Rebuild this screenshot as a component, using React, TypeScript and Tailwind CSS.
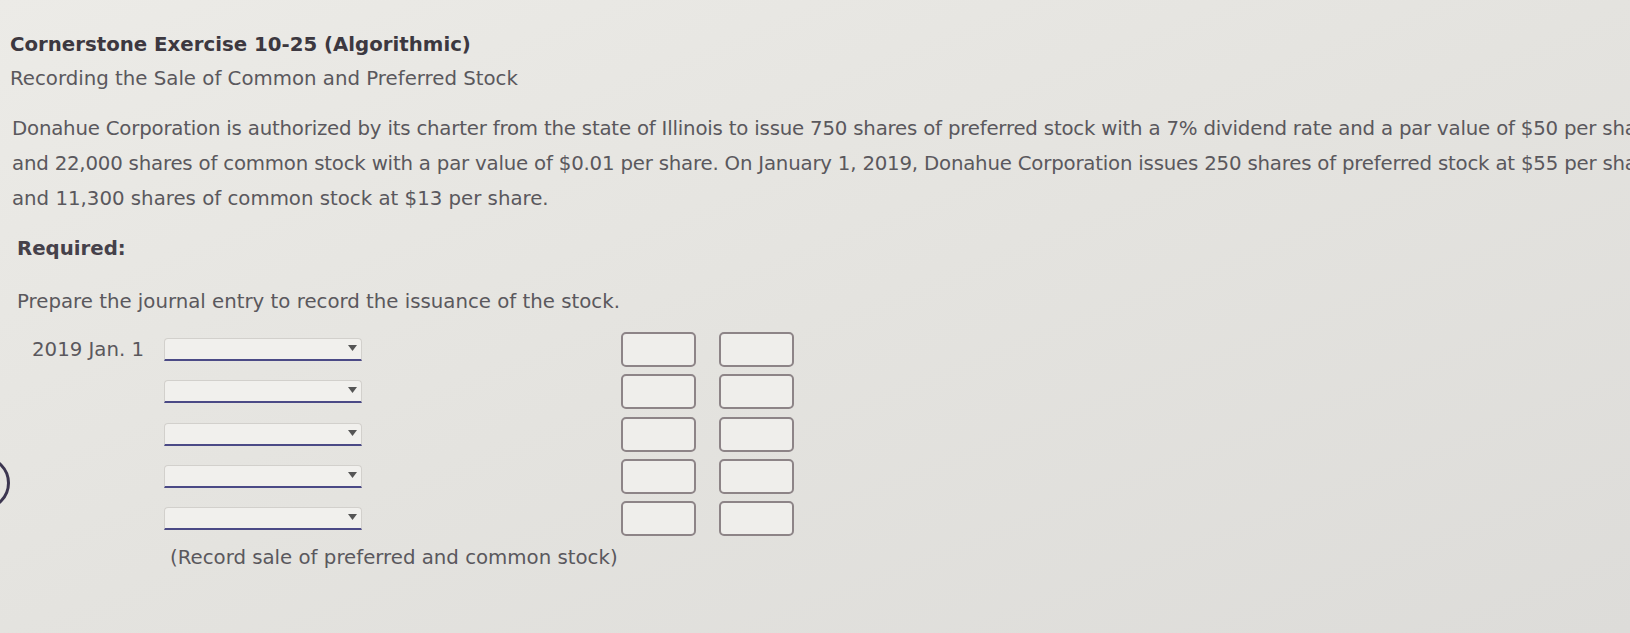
import React from 'react'

const FONT = { fontFamily: '"DejaVu Sans", Verdana, sans-serif' }

function Dropdown() {
  return (
    <div className="relative w-[198px] h-[23px] rounded-t-[4px] border border-b-0 border-[#d2d0cc] bg-[#f1f0ed] border-b-[2px] border-b-[#4b4a86]">
      <svg className="absolute right-[4px] top-[6px]" width="9" height="6" viewBox="0 0 9 6">
        <path d="M0 0 L9 0 L4.5 6 Z" fill="#555" />
      </svg>
    </div>
  )
}

function Box() {
  return <div className="w-[75px] h-[35px] rounded-[5px] border-[2px] border-[#8d8487] bg-[#efeeeb]" />
}

export default function App() {
  const rows = [0, 1, 2, 3, 4]
  return (
    <div
      className="relative w-[1630px] h-[633px] overflow-hidden bg-gradient-to-br from-[#ecebe7] via-[#e4e3df] to-[#dddcd9] text-[#5a585d]"
      style={FONT}
    >
      {/* partial circle at the left edge */}
      <div className="absolute left-[-44px] top-[456px] w-[54px] h-[54px] rounded-full border-[3px] border-[#3c3650]" />

      <div className="pl-[10px] pt-[33px]">
        <h1 className="text-[19.75px] font-bold text-[#3c3840] leading-[24px]">Cornerstone Exercise 10-25 (Algorithmic)</h1>
        <p className="mt-[10px] text-[19.75px] leading-[24px]">Recording the Sale of Common and Preferred Stock</p>

        <div className="mt-[20px] pl-[2px] text-[19.75px] leading-[35px] whitespace-nowrap">
          <div className="tracking-[-0.2px]">Donahue Corporation is authorized by its charter from the state of Illinois to issue 750 shares of preferred stock with a 7% dividend rate and a par value of $50 per share</div>
          <div className="tracking-[-0.2px]">and 22,000 shares of common stock with a par value of $0.01 per share. On January 1, 2019, Donahue Corporation issues 250 shares of preferred stock at $55 per share</div>
          <div>and 11,300 shares of common stock at $13 per share.</div>
        </div>

        <p className="mt-[21px] pl-[7px] text-[19.75px] font-bold text-[#45414a] leading-[24px]">Required:</p>
        <p className="mt-[29px] pl-[7px] text-[19.75px] leading-[24px]">Prepare the journal entry to record the issuance of the stock.</p>

        <div className="mt-[18px] flex items-start">
          <div className="w-[154px] pl-[22px] pt-[6px] text-[19.75px] leading-[24px]">2019 Jan. 1</div>
          <div className="flex flex-col gap-[19.25px] pt-[6px]">
            {rows.map(r => (
              <Dropdown key={r} />
            ))}
          </div>
          <div className="ml-[259px] grid grid-cols-[75px_75px] gap-x-[23px] gap-y-[7.25px]">
            {rows.map(r => (
              <React.Fragment key={r}>
                <Box />
                <Box />
              </React.Fragment>
            ))}
          </div>
        </div>

        <p className="mt-[10px] pl-[160px] text-[19.75px] leading-[24px]">(Record sale of preferred and common stock)</p>
      </div>
    </div>
  )
}
